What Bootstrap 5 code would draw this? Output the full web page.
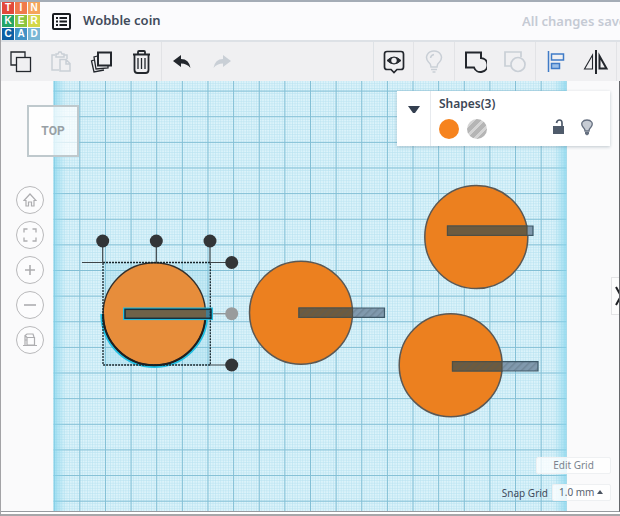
<!DOCTYPE html>
<html lang="en">
<head>
<meta charset="utf-8">
<meta name="viewport" content="width=device-width, initial-scale=1">
<title>Wobble coin</title>
<link href="https://cdn.jsdelivr.net/npm/bootstrap@5.3.0/dist/css/bootstrap.min.css" rel="stylesheet">
<style>
body{font-family:"Noto Sans","Open Sans",sans-serif;font-size:12px;line-height:16px;color:#3f4b5c;background:#fafafb;border-left:1px solid #a3a3a6;border-top:2px solid #a4acb6}
svg{display:block}
button{color:inherit}
.title-bar{height:40px;background:#fbfbfd;border-bottom:2px solid #dde1e6;overflow:hidden}
.brand{display:grid;grid-template-columns:repeat(3,12px);grid-auto-rows:12px;gap:1px;margin-left:1px;color:#fff;font:bold 10px/12px "Liberation Sans",sans-serif;text-align:center;text-decoration:none}
.c1{background:#e2493b}.c2{background:#f07a4b}.c3{background:#f5a55c}
.c4{background:#26a567}.c5{background:#8bc53f}.c6{background:#d3d74a}
.c7{background:#0d5fa4}.c8{background:#4292c6}.c9{background:#79b6d5}
.doc-title{font-size:13px;font-weight:600;color:#414b5b}
.save-state{width:98px;font-size:13px;font-weight:600;color:#c5cad4;overflow:hidden}
.tools{height:39px;background:#f0f0f2}
.tool{width:40px;height:39px;padding:0;border:0;background:none;display:grid;place-items:center;color:#23272d}
.tool:disabled{color:#c9cfd6}
.cut{width:41px;border-right:1px solid #e2e3e6}
.tools-end{margin-right:3px}
.work{border-right:1px solid #65676b;border-bottom:1px solid #979ba0;overflow:hidden}
.plane{position:absolute;inset:0}
.cube{width:52px;height:52px;margin-left:26px;border:2px solid #bfc9cd;background:rgba(255,255,255,.7);color:#98a0a5;font:bold 12px/16px Roboto,sans-serif}
.views{margin:29px 0 0 15px;gap:7px}
.view{width:28px;height:28px;border:1px solid #b9b9bb;border-radius:50%;background:#fcfcfd;color:#adadb0;padding:0;display:grid;place-items:center}
.props{width:213px;height:55px;margin:10px 9px 0 0;background:#fff;box-shadow:0 1px 3px rgba(60,90,110,.3)}
.fold{width:34px;border:0;border-right:1px solid #e7eaee;background:none;padding:0 0 19px;display:grid;place-items:center}
.props h2{font-size:12px;line-height:18px;font-weight:600;margin:0;color:#3c4655}
.swatches{margin-top:6px}
.swatch{width:20px;height:20px;border:0;border-radius:50%;padding:0}
.solid{background:#f6831e}
.hole{background:repeating-linear-gradient(135deg,#b5b5b5 0 4px,#d4d4d4 4px 7px)}
.bare{border:0;background:none;padding:0}
.drawer{width:8px;height:38px;border:1px solid #e4e4e6;border-right:0;background:#fdfdfd;padding:0;margin-top:131px;overflow:hidden}
.gridset{margin:0 8px 10px 0;gap:10px;font-size:10px}
.edit,.snap{height:17px;font-size:10px;line-height:15px;border:1px solid #eef0f2;border-radius:2px;background-color:rgba(255,255,255,.78);color:#7b848e;padding:0}
.edit{width:75px}
.snap{width:59px;padding-left:6px;appearance:none;color:#59636f}
.snap-wrap::after{content:"";position:absolute;right:8px;top:6px;border:3px solid transparent;border-top:0;border-bottom:4px solid #4a5360}
.status{height:4px;background:#fff;border-bottom:2px solid #a7a7aa}
</style>
<script src="https://cdn.jsdelivr.net/npm/bootstrap@5.3.0/dist/js/bootstrap.bundle.min.js"></script>
</head>
<body class="d-flex flex-column min-vh-100 overflow-hidden">
<header class="title-bar d-flex align-items-center flex-shrink-0">
  <a class="brand" href="#" aria-label="Tinkercad"><span class="c1">T</span><span class="c2">I</span><span class="c3">N</span><span class="c4">K</span><span class="c5">E</span><span class="c6">R</span><span class="c7">C</span><span class="c8">A</span><span class="c9">D</span></a>
  <button class="bare ms-2 ps-1 pe-1" aria-label="Designs"><svg width="19" height="17" fill="none" stroke="#191c20" stroke-width="2"><rect x="1" y="1" width="17" height="15" rx="1"/><path d="M4 5h2M7.500 5H15M4 8.500h2M7.500 8.500H15M4 12h2M7.500 12H15"/></svg></button>
  <h1 class="doc-title mb-0 ms-1 ps-1 text-nowrap">Wobble coin</h1>
  <div class="save-state ms-auto text-nowrap">All changes saved</div>
</header>
<nav class="tools d-flex flex-shrink-0" aria-label="Tools">
  <button class="tool" aria-label="Copy"><svg width="22" height="22" fill="none" stroke="currentColor" stroke-width="1.300"><path d="M6 14H1V1h14v5"/><rect x="6.500" y="6.500" width="14" height="14"/></svg></button>
  <button class="tool" disabled aria-label="Paste"><svg width="20" height="22" fill="none" stroke="currentColor" stroke-width="1.500"><path d="M8 19H1V4h3M13 4h3v4M5 3h2l1-2h2l1 2h2v3H5z"/><path d="M9 8.500h6l4 4V20H9zM15 8.500V13h4"/></svg></button>
  <button class="tool" aria-label="Duplicate"><svg width="23" height="22" fill="none" stroke="currentColor"><rect x="8" y="1.500" width="13" height="13" stroke-width="2"/><path stroke-width="1.300" d="M7.500 5 4 6l2 12 12-1v-2M4 9 1.500 10 4 21l10-2"/></svg></button>
  <button class="tool cut" aria-label="Delete"><svg width="19" height="24" fill="none" stroke="currentColor" stroke-width="1.800"><path d="M1 4.500h17M6 4V2q0-1 1-1h5q1 0 1 1v2M2.500 5v15q0 3 3 3h8q3 0 3-3V5"/><path stroke-width="1.300" d="M6 8v11M9.500 8v11M13 8v11"/></svg></button>
  <button class="tool" aria-label="Undo"><svg width="18" height="14"><path fill="currentColor" d="M0 6 8 0v4q8 0 9.500 9Q14 8.500 8 8.500V12z"/></svg></button>
  <button class="tool" disabled aria-label="Redo"><svg width="18" height="14"><path fill="currentColor" d="M18 6 10 0v4Q2 4 .5 13 4 8.500 10 8.500V12z"/></svg></button>
  <div class="tools-end d-flex ms-auto">
    <button class="tool cut border-start" aria-label="Show all"><svg width="22" height="24" fill="none" stroke="currentColor" stroke-width="1.700"><path d="M4 1.500h14q2.500 0 2.500 2.500v13q0 2.500-2.500 2.500h-4L11 22.500 8 19.500H4Q1.500 19.500 1.500 17V4Q1.500 1.500 4 1.500z"/><path fill="currentColor" stroke-width="1" d="M4 10.500Q11 3.500 18 10.500 11 17.500 4 10.500z"/><circle cx="11" cy="10.500" r="2.700" fill="#f0f0f2" stroke="none"/></svg></button>
    <button class="tool cut" disabled aria-label="Light"><svg width="18" height="23" fill="none" stroke="currentColor" stroke-width="1.500"><path d="M6 17Q6 14 3.500 12C-1 7 3 1 9 1s10 6 5.500 11Q12 14 12 17zM5.500 8Q6 5 9 4.500M6 19.500h6M7.500 22h3"/></svg></button>
    <button class="tool" aria-label="Group"><svg width="23" height="22" fill="none" stroke="currentColor" stroke-width="2"><path d="M2 1.500h15v5.500a7 7 0 1 1-7 9.500H2z"/></svg></button>
    <button class="tool cut" disabled aria-label="Ungroup"><svg width="22" height="22" fill="none" stroke="currentColor" stroke-width="1.700"><path d="M7 15H1V1h16v5"/><circle cx="14" cy="13.500" r="7"/></svg></button>
    <button class="tool" aria-label="Align"><svg width="18" height="23" fill="none" stroke="#3f7bc7" stroke-width="1.500"><path d="M1.500 1v21"/><rect x="4.500" y="4" width="12" height="6"/><rect x="4.500" y="13.500" width="8" height="5" fill="#9dc0e8"/></svg></button>
    <button class="tool cut" aria-label="Mirror"><svg width="26" height="26" fill="none" stroke="currentColor"><path stroke-width="1.100" d="M9.500 6v14H1.500z"/><path stroke-width="2" d="M13 1v24M16.500 7v12.500h7z"/></svg></button>
  </div>
</nav>
<main class="work position-relative flex-grow-1 d-flex justify-content-between">
  <svg class="plane" width="100%" height="100%" role="img" aria-label="Workplane">
    <defs>
      <pattern id="fine" x="52.700" y="9.600" width="2.563" height="2.563" patternUnits="userSpaceOnUse"><path d="M0 .3H2.563M.3 0V2.563" stroke="#a9dcec" stroke-width=".6" opacity=".75"/></pattern>
      <pattern id="major" x="52.700" y="9.600" width="25.630" height="25.630" patternUnits="userSpaceOnUse"><path d="M0 .5H25.630M.5 0V25.630" stroke="#83bfd5" stroke-width="1"/></pattern>
      <pattern id="hatch" width="5" height="5" patternUnits="userSpaceOnUse" patternTransform="rotate(45)"><path d="M0 0V5" stroke="#4b5b64" stroke-width="3" opacity=".3"/></pattern>
      <linearGradient id="edge"><stop offset="0" stop-color="#7fd3ec" stop-opacity=".7"/><stop offset=".025" stop-color="#8fd8ee" stop-opacity="0"/><stop offset=".975" stop-color="#8fd8ee" stop-opacity="0"/><stop offset="1" stop-color="#7fd3ec" stop-opacity=".7"/></linearGradient>
    </defs>
    <rect x="52.500" width="513" height="100%" fill="#dcf3fa"/>
    <rect x="52.500" width="513" height="100%" fill="url(#fine)"/>
    <rect x="52.500" width="513" height="100%" fill="url(#major)"/>
    <rect x="52.500" width="513" height="100%" fill="url(#edge)"/>
    <g transform="translate(-1 -81)">
      <rect x="103" y="262.500" width="107" height="102.500" fill="#79cbe4" opacity=".22"/>
      <path d="M102.300 314a52 52 0 0 0 104 0" fill="none" stroke="#22bfe2" stroke-width="4"/>
      <circle cx="154.300" cy="314" r="51.200" fill="#e78d3b" stroke="#34302c" stroke-width="1.400"/>
      <path d="M103.100 314a51.200 51.200 0 0 0 102.400 0" fill="none" stroke="#202020" stroke-width="2"/>
      <rect x="123" y="307.500" width="90" height="12.600" fill="#27bfe1"/>
      <rect x="125" y="309.300" width="86" height="9" fill="#6f6249"/>
      <path d="M206 309.300h5v9h-5z" fill="#417b91"/>
      <rect x="125" y="309.300" width="86" height="9" fill="none" stroke="#17313d" stroke-width="1.500"/>
      <rect x="103" y="262.500" width="107.300" height="102.500" fill="none" stroke="#16242b" stroke-width="1.300" stroke-dasharray="2 1"/>
      <path d="M102.700 241v21M156.300 241v21M210 241v21M82 262.500h21M210 262.500h22M210 365h22" stroke="#3f464a" stroke-width="1.200"/>
      <path d="M213 313.700h15" stroke="#8d9396" stroke-width="1.300"/>
      <g fill="#333537"><circle cx="102.700" cy="241" r="6.500"/><circle cx="156.300" cy="241" r="6.500"/><circle cx="210" cy="241" r="6.500"/><circle cx="231.700" cy="262.500" r="6.500"/><circle cx="231.700" cy="365" r="6.500"/></g>
      <circle cx="231.700" cy="313.700" r="6.500" fill="#999b9c"/>
      <g fill="#ec801f" stroke="#5b5854" stroke-width="1.500"><circle cx="301" cy="312.700" r="51.500"/><circle cx="476.300" cy="237" r="51.500"/><circle cx="450.700" cy="365.200" r="51.500"/></g>
      <g stroke="#3d5968" stroke-width="1.200">
        <path fill="#8099ad" d="M299 308h85.500v9.300H299zM447.500 226H533v9.300h-85.500zM452.500 361.700H538v9.300h-85.500z"/>
        <path fill="#6c5b40" stroke="#504f43" d="M299 308h53.500v9.300H299zM447.500 226H527v9.300h-79.500zM452.500 361.700h49.500v9.300h-49.500z"/>
      </g>
      <path fill="url(#hatch)" d="M299 308h85.500v9.300H299zM452.500 361.700H538v9.300h-85.500z"/>
    </g>
  </svg>
  <div class="position-relative">
    <button class="cube mt-4 p-0 d-grid align-items-center" aria-label="View cube, top"><span>TOP</span></button>
    <div class="views d-flex flex-column">
      <button class="view" aria-label="Home view"><svg width="14" height="14" fill="none" stroke="currentColor" stroke-width="1.200"><path d="M1 7.500 7 1l6 6.500h-2V13H8.500V9h-3v4H3V7.500z"/></svg></button>
      <button class="view" aria-label="Fit view"><svg width="14" height="14" fill="none" stroke="currentColor" stroke-width="1.300"><path d="M1 4.500V1h3.500M9.500 1H13v3.500M13 9.500V13H9.500M4.500 13H1V9.500"/></svg></button>
      <button class="view" aria-label="Zoom in"><svg width="12" height="12" stroke="currentColor" stroke-width="1.600"><path d="M6 1v10M1 6h10"/></svg></button>
      <button class="view" aria-label="Zoom out"><svg width="12" height="12" stroke="currentColor" stroke-width="1.600"><path d="M0 6h12"/></svg></button>
      <button class="view" aria-label="Orthographic view"><svg width="14" height="14" fill="none" stroke="currentColor" stroke-width="1.200"><path d="M0 12.500h14M2 12V2.500L4 1h6l1 3M4 4.500h7.500V12H4zM2 2.500l2 2M2 7h2"/></svg></button>
    </div>
  </div>
  <div class="position-relative d-flex flex-column align-items-end">
    <section class="props d-flex flex-shrink-0">
      <button class="fold" aria-label="Collapse"><svg width="12" height="7"><path fill="#343f50" d="M0 0h12L7 7H5z"/></svg></button>
      <div class="flex-grow-1 ps-2 pt-1 pe-3">
        <h2>Shapes(3)</h2>
        <div class="swatches d-flex align-items-center">
          <button class="swatch solid" aria-label="Solid"></button>
          <button class="swatch hole ms-2" aria-label="Hole"></button>
          <button class="bare ms-auto" aria-label="Lock"><svg width="13" height="20"><path fill="#4f5b6b" d="M1 7h11v8H1z"/><path d="M10 7V4q0-3-2.500-3T4.500 4" fill="none" stroke="#4f5b6b" stroke-width="1.700"/></svg></button>
          <button class="bare ms-3" aria-label="Visibility"><svg width="13" height="20" fill="#c7ccd4" stroke="#667080" stroke-width="1.300"><path d="M4 12Q4 10 2 8C-1 4 2 1 6 1s7 3 4 7Q8 10 8 12z"/><path d="M4 13h4v2L6 16.500 4 15z" fill="#667080" stroke="none"/></svg></button>
        </div>
      </div>
    </section>
    <button class="drawer flex-shrink-0" aria-label="Open shapes panel"><svg width="9" height="20" fill="none" stroke="#202226" stroke-width="2"><path d="M4 1 9 10 4 19"/></svg></button>
    <div class="gridset d-flex flex-column align-items-end mt-auto">
      <button class="edit">Edit Grid</button>
      <div class="d-flex align-items-center"><label for="snap" class="me-1">Snap Grid</label><span class="snap-wrap position-relative d-flex"><select id="snap" class="snap"><option>1.0 mm</option></select></span></div>
    </div>
  </div>
</main>
<footer class="status flex-shrink-0"></footer>
</body>
</html>
